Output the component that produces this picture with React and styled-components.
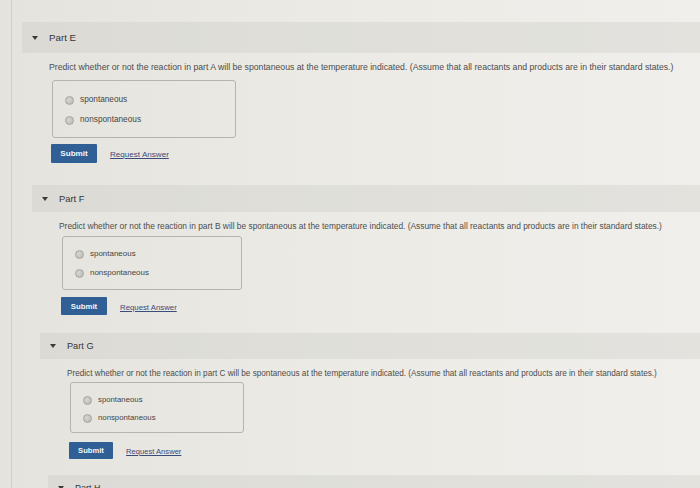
import React from 'react'
import styled, { createGlobalStyle } from 'styled-components'

const GlobalStyle = createGlobalStyle`
  html, body {
    margin: 0;
    padding: 0;
  }
  body {
    width: 700px;
    height: 488px;
    overflow: hidden;
    font-family: "Liberation Sans", Arial, sans-serif;
    background: linear-gradient(to right, #e4e3dd 0%, #ebeae5 45%, #f0efeb 100%);
  }
`

const Page = styled.div`
  height: 488px;
  overflow: hidden;
  margin-left: 11px;
  border-left: 1px solid #cfcec8;
  display: flex;
  flex-direction: column;
`

const TopButton = styled.div`
  margin-left: 35px;
  width: 47px;
  height: 4px;
  background: #2f5e92;
  border-radius: 0 0 2px 2px;
`

const Section = styled.section`
  display: flex;
  flex-direction: column;
  margin-left: ${p => p.$shift}px;
  margin-top: ${p => p.$top}px;
  font-size: ${p => p.$size}px;
`

const Header = styled.div`
  display: flex;
  align-items: center;
  height: ${p => p.$h}px;
  background: rgba(200, 199, 192, 0.32);
  padding-left: 10px;
`

const Arrow = styled.span`
  width: 0;
  height: 0;
  border-left: 3px solid transparent;
  border-right: 3px solid transparent;
  border-top: 4px solid #3a3a3a;
  margin-right: 11px;
`

const Title = styled.h3`
  margin: 0;
  font-size: 1.12em;
  font-weight: normal;
  color: #363636;
`

const Body = styled.div`
  display: flex;
  flex-direction: column;
  padding-left: 27px;
`

const Question = styled.p`
  margin: 9px 0 0;
  color: #4d4d4d;
  line-height: 11px;
  white-space: nowrap;
`

const OptionBox = styled.div`
  margin: ${p => p.$gap}px 0 0 3px;
  width: ${p => p.$w}px;
  height: ${p => p.$h}px;
  box-sizing: border-box;
  border: 1px solid #b5b5b0;
  border-radius: 3px;
  padding: ${p => p.$pad}px 0 0 12px;
  display: flex;
  flex-direction: column;
  gap: ${p => p.$row}px;
`

const Option = styled.label`
  display: flex;
  align-items: center;
  gap: 6px;
  color: #454545;
  font-size: 0.95em;
  line-height: 10px;
`

const Radio = styled.span`
  width: 7px;
  height: 7px;
  border-radius: 50%;
  background: radial-gradient(circle at 40% 40%, #d6d6d3, #b5b5b2);
  border: 1px solid #a6a6a3;
`

const Actions = styled.div`
  display: flex;
  align-items: center;
  gap: 13px;
  margin: ${p => p.$gap}px 0 0 2px;
`

const SubmitButton = styled.button`
  width: ${p => p.$w}px;
  height: ${p => p.$h}px;
  padding: 0;
  border: none;
  border-radius: 1px;
  background: #2f5f94;
  color: #f4f6fa;
  font-family: inherit;
  font-size: 0.93em;
  font-weight: bold;
`

const RequestLink = styled.a`
  color: #3c4c7a;
  font-size: 0.93em;
  text-decoration: underline;
  margin-top: 2px;
`

const question = part =>
  `Predict whether or not the reaction in part ${part} will be spontaneous at the temperature indicated. (Assume that all reactants and products are in their standard states.)`

const parts = [
  { name: 'E', from: 'A', shift: 10, top: 22, size: 8.7, header: 31, gap: 7, box: [184, 58], pad: 14, row: 10, act: 6, btn: [46, 19] },
  { name: 'F', from: 'B', shift: 20, top: 22, size: 8.4, header: 27, gap: 4, box: [180, 54], pad: 12, row: 9, act: 7, btn: [46, 18] },
  { name: 'G', from: 'C', shift: 28, top: 18, size: 8.2, header: 26, gap: 3, box: [174, 51], pad: 12, row: 8, act: 9, btn: [44, 17] },
]

const Part = ({ p }) => (
  <Section $shift={p.shift} $top={p.top} $size={p.size}>
    <Header $h={p.header}>
      <Arrow />
      <Title>Part {p.name}</Title>
    </Header>
    <Body>
      <Question>{question(p.from)}</Question>
      <OptionBox $gap={p.gap} $w={p.box[0]} $h={p.box[1]} $pad={p.pad} $row={p.row}>
        <Option><Radio />spontaneous</Option>
        <Option><Radio />nonspontaneous</Option>
      </OptionBox>
      <Actions $gap={p.act}>
        <SubmitButton $w={p.btn[0]} $h={p.btn[1]}>Submit</SubmitButton>
        <RequestLink href="#">Request Answer</RequestLink>
      </Actions>
    </Body>
  </Section>
)

export default function App() {
  return (
    <>
      <GlobalStyle />
      <Page>
        <TopButton />
        {parts.map(p => <Part key={p.name} p={p} />)}
        <Section $shift={36} $top={16} $size={8}>
          <Header $h={26}>
            <Arrow />
            <Title>Part H</Title>
          </Header>
        </Section>
      </Page>
    </>
  )
}
